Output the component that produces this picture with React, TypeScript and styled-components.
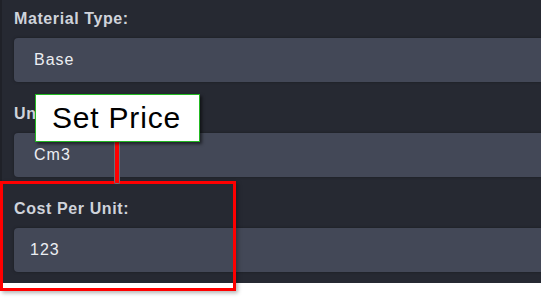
import React from "react";
import styled, { createGlobalStyle } from "styled-components";

const Global = createGlobalStyle`
  html, body { margin: 0; padding: 0; background: #ffffff; }
  body { font-family: "Liberation Sans", Arial, sans-serif; }
  #root { width: 541px; height: 299px; overflow: hidden; position: relative; }
`;

const Stage = styled.div`
  position: relative;
  width: 541px;
  height: 299px;
  background: #ffffff;
`;

const Panel = styled.div`
  box-sizing: border-box;
  width: 541px;
  height: 283px;
  background: #262932;
  border-left: 2px solid #1f2128;
  padding: 10px 0 11px 12px;
  display: flex;
  flex-direction: column;
  gap: 23px;
  overflow: hidden;
`;

const Field = styled.div`
  display: flex;
  flex-direction: column;
  gap: 10px;
`;

const Label = styled.div`
  font-size: 16px;
  line-height: 18px;
  font-weight: bold;
  letter-spacing: 0.6px;
  color: #cfd3db;
`;

const Control = styled.div<{ $inset: number }>`
  box-sizing: border-box;
  height: 44px;
  width: 560px;
  border-radius: 4px;
  background: #434857;
  box-shadow: 0 0 3px rgba(0, 0, 0, 0.35);
  display: flex;
  align-items: center;
  padding-left: ${(p) => p.$inset}px;
  font-size: 16px;
  letter-spacing: 1px;
  color: #eceef2;
`;

const Callout = styled.div`
  position: absolute;
  left: 35px;
  top: 94px;
  box-sizing: border-box;
  width: 165px;
  height: 48px;
  background: #ffffff;
  border: 1px solid #22b922;
  box-shadow: 2px 2px 3px rgba(0, 0, 0, 0.55);
  display: flex;
  align-items: center;
  padding-left: 16px;
  font-size: 30px;
  letter-spacing: 0.8px;
  color: #000000;
`;

const Connector = styled.div`
  position: absolute;
  left: 114px;
  top: 142px;
  box-sizing: border-box;
  width: 6px;
  height: 42px;
  background: #ff0000;
  border: 1px solid #6b6f78;
  border-top: none;
  border-radius: 0 0 2px 2px;
`;

const Highlight = styled.div`
  position: absolute;
  left: 0;
  top: 181px;
  box-sizing: border-box;
  width: 236px;
  height: 110px;
  border: 3px solid #ff0000;
  box-shadow: 2px 2px 4px rgba(0, 0, 0, 0.3);
`;

const fields = [
  { label: "Material Type:", value: "Base", inset: 20 },
  { label: "Unit:", value: "Cm3", inset: 20 },
  { label: "Cost Per Unit:", value: "123", inset: 16 },
];

export default function App() {
  return (
    <Stage>
      <Global />
      <Panel>
        {fields.map((f) => (
          <Field key={f.label}>
            <Label>{f.label}</Label>
            <Control $inset={f.inset}>{f.value}</Control>
          </Field>
        ))}
      </Panel>
      <Highlight />
      <Connector />
      <Callout>Set Price</Callout>
    </Stage>
  );
}
